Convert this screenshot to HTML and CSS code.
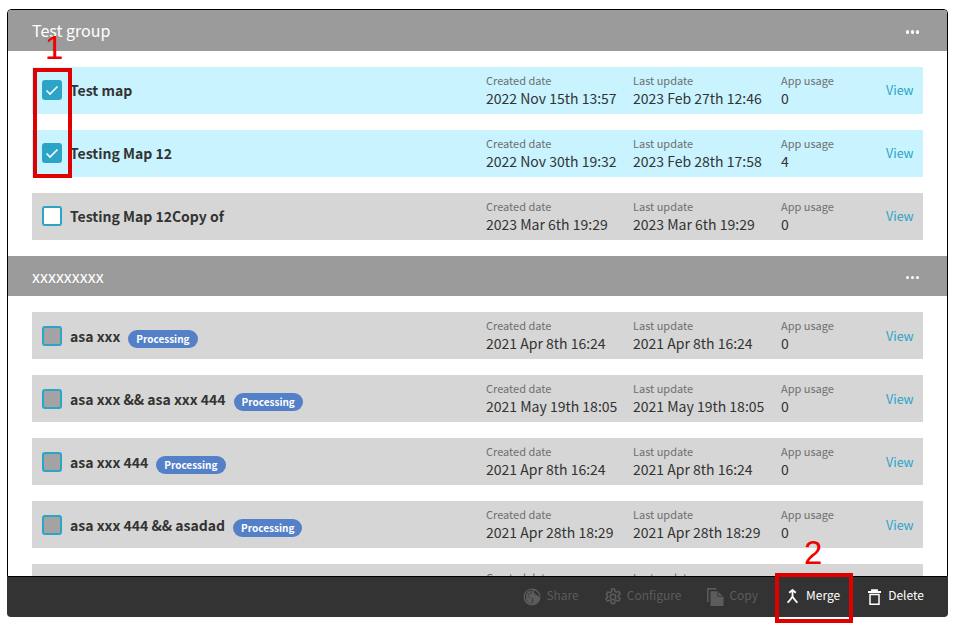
FILE: index.html
```html
<!DOCTYPE html>
<html lang="en">
<head>
<meta charset="utf-8">
<title>Maps</title>
<link rel="stylesheet" href="styles.css">
</head>
<body>
<main class="window">
  <div class="scroll">
    <section>
      <header class="group-head group-head-first"><span class="group-title">Test group</span><span class="dots"><i></i><i></i><i></i></span></header>
      <div class="rows">
        <div class="row selected">
          <span class="check on"><svg viewBox="0 0 20 20"><path d="M4.500 10.500l3.500 3.500 7.500-7.500"/></svg></span>
          <span class="name">Test map</span>
          <div class="meta created"><span class="label">Created date</span><span class="value">2022 Nov 15th 13:57</span></div>
          <div class="meta updated"><span class="label">Last update</span><span class="value">2023 Feb 27th 12:46</span></div>
          <div class="meta usage"><span class="label">App usage</span><span class="value">0</span></div>
          <a class="view">View</a>
        </div>
        <div class="row selected">
          <span class="check on"><svg viewBox="0 0 20 20"><path d="M4.500 10.500l3.500 3.500 7.500-7.500"/></svg></span>
          <span class="name">Testing Map 12</span>
          <div class="meta created"><span class="label">Created date</span><span class="value">2022 Nov 30th 19:32</span></div>
          <div class="meta updated"><span class="label">Last update</span><span class="value">2023 Feb 28th 17:58</span></div>
          <div class="meta usage"><span class="label">App usage</span><span class="value">4</span></div>
          <a class="view">View</a>
        </div>
        <div class="row">
          <span class="check white"></span>
          <span class="name">Testing Map 12Copy of</span>
          <div class="meta created"><span class="label">Created date</span><span class="value">2023 Mar 6th 19:29</span></div>
          <div class="meta updated"><span class="label">Last update</span><span class="value">2023 Mar 6th 19:29</span></div>
          <div class="meta usage"><span class="label">App usage</span><span class="value">0</span></div>
          <a class="view">View</a>
        </div>
      </div>
    </section>
    <section class="processing">
      <header class="group-head"><span class="group-title">xxxxxxxxx</span><span class="dots"><i></i><i></i><i></i></span></header>
      <div class="rows">
        <div class="row">
          <span class="check off"></span>
          <span class="name">asa xxx</span><span class="badge">Processing</span>
          <div class="meta created"><span class="label">Created date</span><span class="value">2021 Apr 8th 16:24</span></div>
          <div class="meta updated"><span class="label">Last update</span><span class="value">2021 Apr 8th 16:24</span></div>
          <div class="meta usage"><span class="label">App usage</span><span class="value">0</span></div>
          <a class="view">View</a>
        </div>
        <div class="row">
          <span class="check off"></span>
          <span class="name">asa xxx &amp;&amp; asa xxx 444</span><span class="badge">Processing</span>
          <div class="meta created"><span class="label">Created date</span><span class="value">2021 May 19th 18:05</span></div>
          <div class="meta updated"><span class="label">Last update</span><span class="value">2021 May 19th 18:05</span></div>
          <div class="meta usage"><span class="label">App usage</span><span class="value">0</span></div>
          <a class="view">View</a>
        </div>
        <div class="row">
          <span class="check off"></span>
          <span class="name">asa xxx 444</span><span class="badge">Processing</span>
          <div class="meta created"><span class="label">Created date</span><span class="value">2021 Apr 8th 16:24</span></div>
          <div class="meta updated"><span class="label">Last update</span><span class="value">2021 Apr 8th 16:24</span></div>
          <div class="meta usage"><span class="label">App usage</span><span class="value">0</span></div>
          <a class="view">View</a>
        </div>
        <div class="row">
          <span class="check off"></span>
          <span class="name">asa xxx 444 &amp;&amp; asadad</span><span class="badge">Processing</span>
          <div class="meta created"><span class="label">Created date</span><span class="value">2021 Apr 28th 18:29</span></div>
          <div class="meta updated"><span class="label">Last update</span><span class="value">2021 Apr 28th 18:29</span></div>
          <div class="meta usage"><span class="label">App usage</span><span class="value">0</span></div>
          <a class="view">View</a>
        </div>
        <div class="row">
          <span class="check off"></span>
          <span class="name"></span>
          <div class="meta created"><span class="label">Created date</span><span class="value"></span></div>
          <div class="meta updated"><span class="label">Last update</span><span class="value"></span></div>
          <div class="meta usage"><span class="label">App usage</span><span class="value"></span></div>
        </div>
      </div>
    </section>
  </div>
  <footer class="toolbar">
    <button class="tool disabled tool-share"><svg viewBox="0 0 18 18"><circle cx="9" cy="9" r="8.500" class="fill"/><path class="cut" d="M2.200 6.500C3.500 3.600 6 2 8.500 1.600l1.400 1.900-1.800 2.200-2.600.5-.3 2.200 2.600 1.600 1.900.2.700 2-1.500 3.400C5.800 15.200 3 13 2 10.500z"/><path class="fill" d="M3 6.500 5.500 3.500 8 2.800 9 3.800 7.500 5.200 5 5.800 4.700 8.500 7.500 10.300 9 10.500 9.500 12 8 15.500 5.500 14.300 3.200 11.500z"/><path class="cut" d="M11 2.300l2.800 1.400 2.400 3.300.3 2.500-2-2.200-2-.5-1.500-2.200z"/></svg><span class="tool-label">Share</span></button>
    <button class="tool disabled tool-config"><svg viewBox="0 0 18 18"><path class="line" d="M7.500 1h3l.4 2.300 1.500.8 2.200-.8 1.500 2.600-1.800 1.500v1.700l1.800 1.500-1.500 2.600-2.200-.8-1.500.8-.4 2.300h-3l-.4-2.300-1.500-.8-2.200.8-1.500-2.600 1.800-1.500V7.900L2.400 6.400l1.500-2.600 2.200.8 1.500-.8z"/><circle class="line" cx="9" cy="9" r="2.700"/></svg><span class="tool-label">Configure</span></button>
    <button class="tool disabled tool-copy"><svg viewBox="0 0 17 18"><path class="line" d="M.8 14V.8h8.700"/><path class="fill" d="M3.500 3.300h7l6 5.500V18h-13z"/><path class="cut" d="M10.500 3.300v5.500h6l-.8-.8h-4.400V4z"/></svg><span class="tool-label">Copy</span></button>
    <button class="tool tool-merge"><svg viewBox="0 0 14 15"><path class="line" d="M3.200 3.800 6.500 1l3.300 2.800M6.500 1.200v5.800c0 2.200-2.600 3.200-4.800 6.800M6.500 7c0 2.200 2.600 3.200 4.800 6.800"/></svg><span class="tool-label">Merge</span></button>
    <button class="tool tool-delete"><svg viewBox="0 0 13 16"><path class="line thick" d="M0 3h13M4 3V1.100h5V3"/><path class="line" d="M2 5.500h9v9.700H2z"/></svg><span class="tool-label">Delete</span></button>
  </footer>
</main>
<div class="mark mark-one"></div>
<div class="mark mark-two"></div>
<span class="num num-one">1</span>
<span class="num num-two">2</span>
</body>
</html>
```
FILE: styles.css
```css
* { box-sizing: border-box; }
html, body { height: 100%; }
body {
  margin: 0;
  background: #fff;
  padding: 9px 7px 8px;
  overflow: hidden;
  font-family: "Noto Sans CJK JP", "Noto Sans", sans-serif;
  color: #333;
  position: relative;
}
.window {
  height: 608px;
  width: 941px;
  display: flex;
  flex-direction: column;
  border-radius: 4px;
  overflow: hidden;
  background: #fff;
}
.scroll {
  flex: 1;
  min-height: 0;
  overflow: hidden;
  border: 1px solid #000;
  border-radius: 4px 4px 0 0;
}
.group-head {
  height: 40px;
  background: #9b9b9b;
  color: #fff;
  display: flex;
  align-items: center;
  justify-content: space-between;
  padding: 0 28px 0 24px;
}
.group-head-first { height: 41px; }
.group-head-first .group-title { margin-top: -2px; }
.group-title { font-size: 16px; line-height: 1; }
.dots { display: flex; gap: 1.5px; margin-top: 3px; }
.dots i { width: 3.5px; height: 3.5px; border-radius: 50%; background: #fff; }
.rows {
  display: flex;
  flex-direction: column;
  gap: 16px;
  padding: 16px 24px;
}
.row {
  height: 47px;
  flex: none;
  background: #d6d6d6;
  display: flex;
  align-items: center;
  padding-left: 10px;
  position: relative;
}
.row.selected { background: #c8f3ff; }
.check {
  width: 20px;
  height: 20px;
  border-radius: 3px;
  border: 2px solid #2ba4c8;
  flex: none;
  margin-right: 8px;
  display: block;
  align-self: flex-start;
  margin-top: 13px;
}
.processing .check { margin-top: 14px; }
.check svg { display: block; width: 20px; height: 20px; margin: -2px; fill: none; stroke: #fff; stroke-width: 1.6; }
.check.on { background: #2ba4c8; }
.check.white { background: #fff; }
.check.off { background: #a3a3a3; }
.name { font-size: 14px; font-weight: 700; color: #333; line-height: 20px; white-space: nowrap; margin-top: -2px; }
.processing .name { margin-top: 0; }
.badge {
  margin-left: 8px;
  margin-top: 6px;
  height: 18px;
  padding: 0 8px;
  border-radius: 9px;
  background: #5480c8;
  color: #fff;
  font-size: 10px;
  font-weight: 700;
  line-height: 18px;
  white-space: nowrap;
}
.meta { position: absolute; top: 6px; display: flex; flex-direction: column; }
.created { left: 454px; }
.updated { left: 601px; }
.usage { left: 749px; }
.label { font-size: 11px; line-height: 14px; color: #6f6f6f; white-space: nowrap; }
.value { font-size: 14px; line-height: 20px; color: #333; margin-top: 1px; white-space: nowrap; min-height: 20px; }
.view { position: absolute; left: 854px; top: 13px; font-size: 12.5px; line-height: 20px; color: #2ba4c8; }
.processing .view { top: 14px; }
.toolbar {
  height: 40px;
  flex: none;
  background: #333;
  display: flex;
  align-items: center;
  justify-content: flex-end;
  padding-right: 24px;
}
.tool {
  background: none;
  border: 0;
  padding: 0;
  font: inherit;
  font-size: 12px;
  line-height: 16px;
  color: #fff;
  display: flex;
  align-items: center;
}
.tool-label { margin-bottom: 4px; }
.tool svg { display: block; flex: none; }
.tool .line { fill: none; stroke: currentColor; stroke-width: 1.5; }
.tool-merge .line { stroke-width: 1.8; }
.tool .thick { stroke-width: 1.8; }
.tool .fill { fill: currentColor; }
.tool .cut { fill: #333; }
.tool.disabled { color: #5c5c5c; }
.tool-share svg { width: 18px; height: 18px; margin-right: 5px; }
.tool-config { margin-left: 25px; }
.tool-config svg { width: 18px; height: 18px; margin-right: 5px; }
.tool-copy { margin-left: 26px; }
.tool-copy svg { width: 17px; height: 18px; margin-right: 5px; }
.tool-merge { margin-left: 28px; }
.tool-merge svg { width: 14px; height: 15px; margin-right: 6px; margin-top: -1px; }
.tool-delete { margin-left: 28px; }
.tool-delete svg { width: 13px; height: 16px; margin-right: 7px; }
.mark { position: absolute; border: 4px solid #e00000; }
.mark-one { left: 33px; top: 68px; width: 39px; height: 110px; }
.mark-two { left: 775px; top: 573px; width: 78px; height: 50px; }
.num { position: absolute; color: #f00000; font-family: "Liberation Sans", sans-serif; font-size: 33px; line-height: 33px; }
.num-one { left: 45px; top: 31px; }
.num-two { left: 804px; top: 536px; }
```
